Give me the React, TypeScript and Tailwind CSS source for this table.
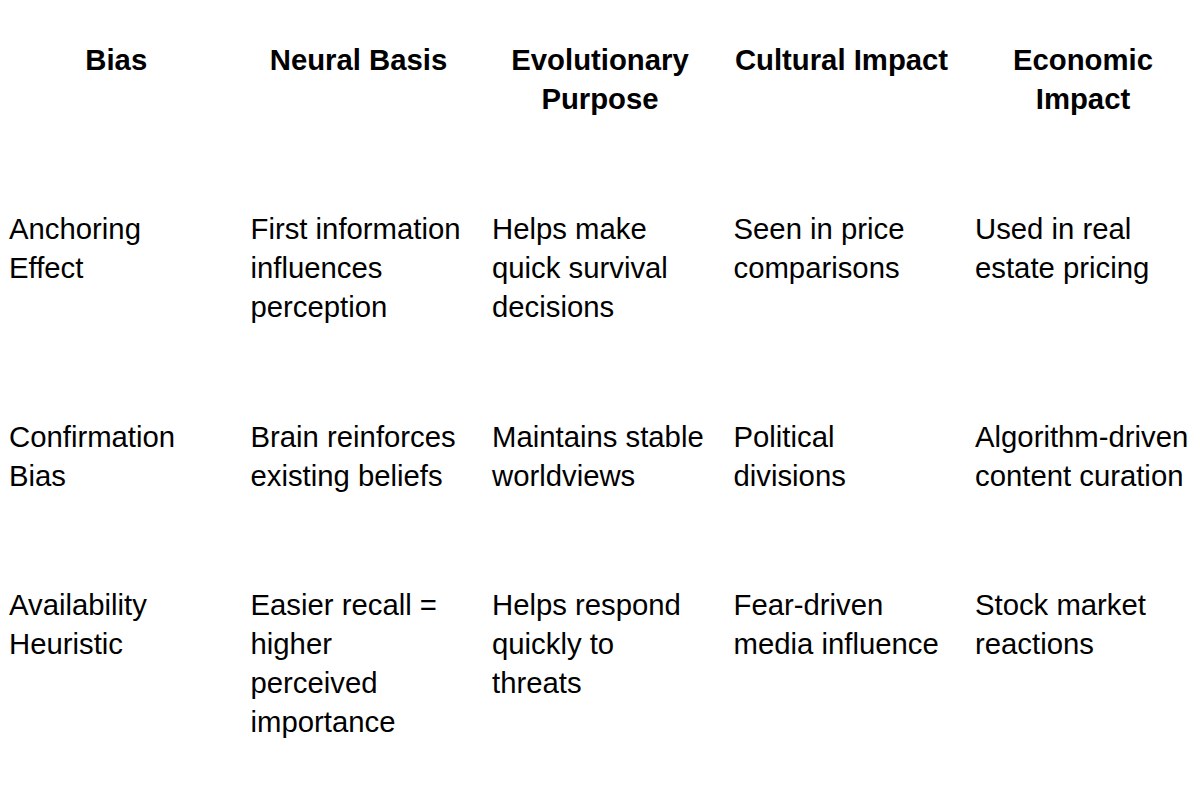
import React from "react";

const headers = [
  "Bias",
  "Neural Basis",
  "Evolutionary Purpose",
  "Cultural Impact",
  "Economic Impact",
];

const rows: string[][] = [
  [
    "Anchoring Effect",
    "First information influences perception",
    "Helps make quick survival decisions",
    "Seen in price comparisons",
    "Used in real estate pricing",
  ],
  [
    "Confirmation Bias",
    "Brain reinforces existing beliefs",
    "Maintains stable worldviews",
    "Political divisions",
    "Algorithm-driven content curation",
  ],
  [
    "Availability Heuristic",
    "Easier recall = higher perceived importance",
    "Helps respond quickly to threats",
    "Fear-driven media influence",
    "Stock market reactions",
  ],
];

export default function App() {
  return (
    <div
      className="w-[1200px] h-[786px] bg-white text-black overflow-hidden"
      style={{ fontFamily: '"Liberation Sans", Arial, sans-serif' }}
    >
      <div className="grid grid-cols-[repeat(5,241.5px)] text-[29.3px] leading-[39px]">
        {headers.map((h, j) => (
          <div
            key={h}
            className={`pt-[40px] pb-[45px] pl-[9px] text-center font-bold ${
              j === 0 ? "pr-[18px]" : "pr-[16.5px]"
            }`}
          >
            {h}
          </div>
        ))}
        {rows.map((r, i) =>
          r.map((c, j) => (
            <div
              key={`${i}-${j}`}
              className={`pl-[9px] ${j === 0 ? "pr-[22px]" : "pr-[16.5px]"} ${
                i === 2 ? "pt-[45px] pb-[45px]" : "pt-[46px] pb-[45px]"
              }`}
            >
              {c}
            </div>
          ))
        )}
      </div>
    </div>
  );
}
